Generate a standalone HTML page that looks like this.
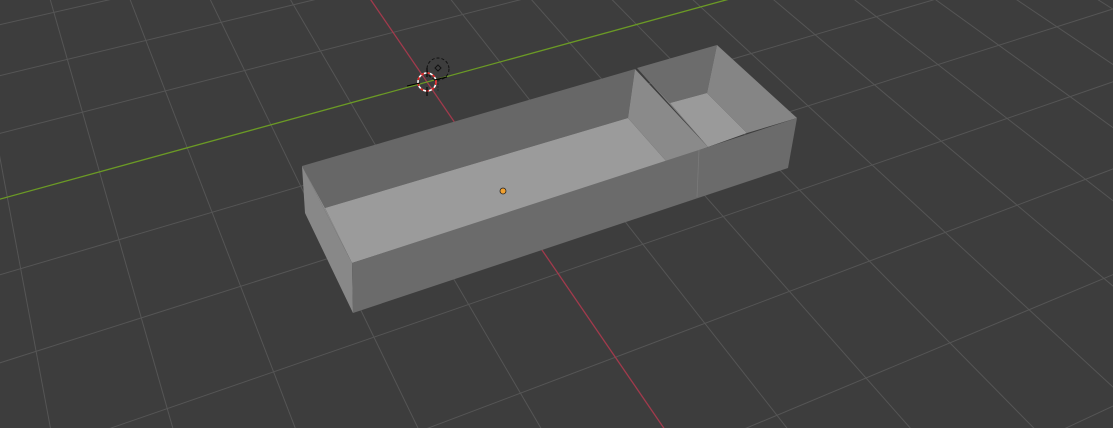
<!DOCTYPE html>
<html><head><meta charset="utf-8"><style>
html,body{margin:0;padding:0;background:#3d3d3d;overflow:hidden;width:1113px;height:428px}
svg{display:block}
</style></head><body>
<svg id="s" width="1113" height="428" viewBox="0 0 1113 428" xmlns="http://www.w3.org/2000/svg">
<rect width="1113" height="428" fill="#3d3d3d"/>
<g id="grid" stroke="#555555" stroke-width="1" fill="none"></g>
<g id="axes" fill="none" stroke-width="1.3"></g>
<g stroke="none">
  <polygon points="302,166 635,69 628,118 325,208" fill="#676767"/>
  <polygon points="325,208 628,118 667,162 352,263" fill="#9b9b9b"/>
  <polygon points="635,69 708,147 667,162 628,118" fill="#8a8a8a"/>
  <polygon points="302,166 325,208 352,263" fill="#8e8e8e"/>
  <polygon points="637,68 717,45 707,93 670,103" fill="#6c6c6c"/>
  <polygon points="637,68 670,103 708,147" fill="#7e7e7e"/>
  <polygon points="670,103 707,93 747,133 708,147" fill="#9a9a9a"/>
  <polygon points="717,45 797,118 747,133 707,93" fill="#858585"/>
  <polygon points="302,166 352,263 353,313 305,213" fill="#888888"/>
  <polygon points="352,263 797,118 788,168 353,313" fill="#6b6b6b"/>
  <line x1="699" y1="150" x2="697" y2="197" stroke="#7a7a7a" stroke-width="0.8"/>
</g>
<circle cx="503" cy="191" r="3" fill="#f0a030" stroke="#222" stroke-width="0.8"/>
<circle cx="438" cy="69" r="11" fill="none" stroke="#111" stroke-width="1" stroke-dasharray="3,2"/>
<path d="M438 65 l3 3 -3 3 -3 -3z" fill="none" stroke="#111" stroke-width="1"/>
<line x1="438" y1="80" x2="438" y2="92" stroke="#222" stroke-width="0.8" stroke-dasharray="2,1"/>
<circle cx="427" cy="82" r="9" fill="none" stroke="#fff" stroke-width="1.6"/>
<circle cx="427" cy="82" r="9" fill="none" stroke="#e02020" stroke-width="1.6" stroke-dasharray="3,3"/>
<line x1="427" y1="68" x2="427" y2="77" stroke="#000" stroke-width="1"/>
<line x1="427" y1="87" x2="427" y2="96" stroke="#000" stroke-width="1"/>
<line x1="407" y1="86" x2="420" y2="83" stroke="#000" stroke-width="1"/>
<line x1="434" y1="80" x2="447" y2="77" stroke="#000" stroke-width="1"/>
</svg>
<script>
(function(){
var O=[427,82],A=[3755,-831],B=[-180,-805],wa=0.0224,wb=0.0592,EPS=0.12;
function P(u,v){var d=wa*u+wb*v+1;return [(wa*u*A[0]+wb*v*B[0]+O[0])/d,(wa*u*A[1]+wb*v*B[1]+O[1])/d];}
var g=document.getElementById('grid'),ax=document.getElementById('axes'),ns='http://www.w3.org/2000/svg';
function L(p,q,par,col){var l=document.createElementNS(ns,'line');l.setAttribute('x1',p[0].toFixed(1));l.setAttribute('y1',p[1].toFixed(1));l.setAttribute('x2',q[0].toFixed(1));l.setAttribute('y2',q[1].toFixed(1));if(col)l.setAttribute('stroke',col);par.appendChild(l);}
var umin=-60,umax=200,vmin=-60,vmax=200;
function ul(u,col,par){var lo=Math.max(vmin,(EPS-1-wa*u)/wb);if(lo>=vmax)return;L(P(u,lo),P(u,vmax),par,col);}
function vl(v,col,par){var lo=Math.max(umin,(EPS-1-wb*v)/wa);if(lo>=umax)return;L(P(lo,v),P(umax,v),par,col);}
for(var u=umin;u<=umax;u++){if(u==0)continue;ul(u,null,g);}
for(var v=vmin;v<=vmax;v++){if(v==0)continue;vl(v,null,g);}
ul(0,'#a13a4c',ax);
vl(0,'#6b9a25',ax);
})();
</script>
</body></html>
